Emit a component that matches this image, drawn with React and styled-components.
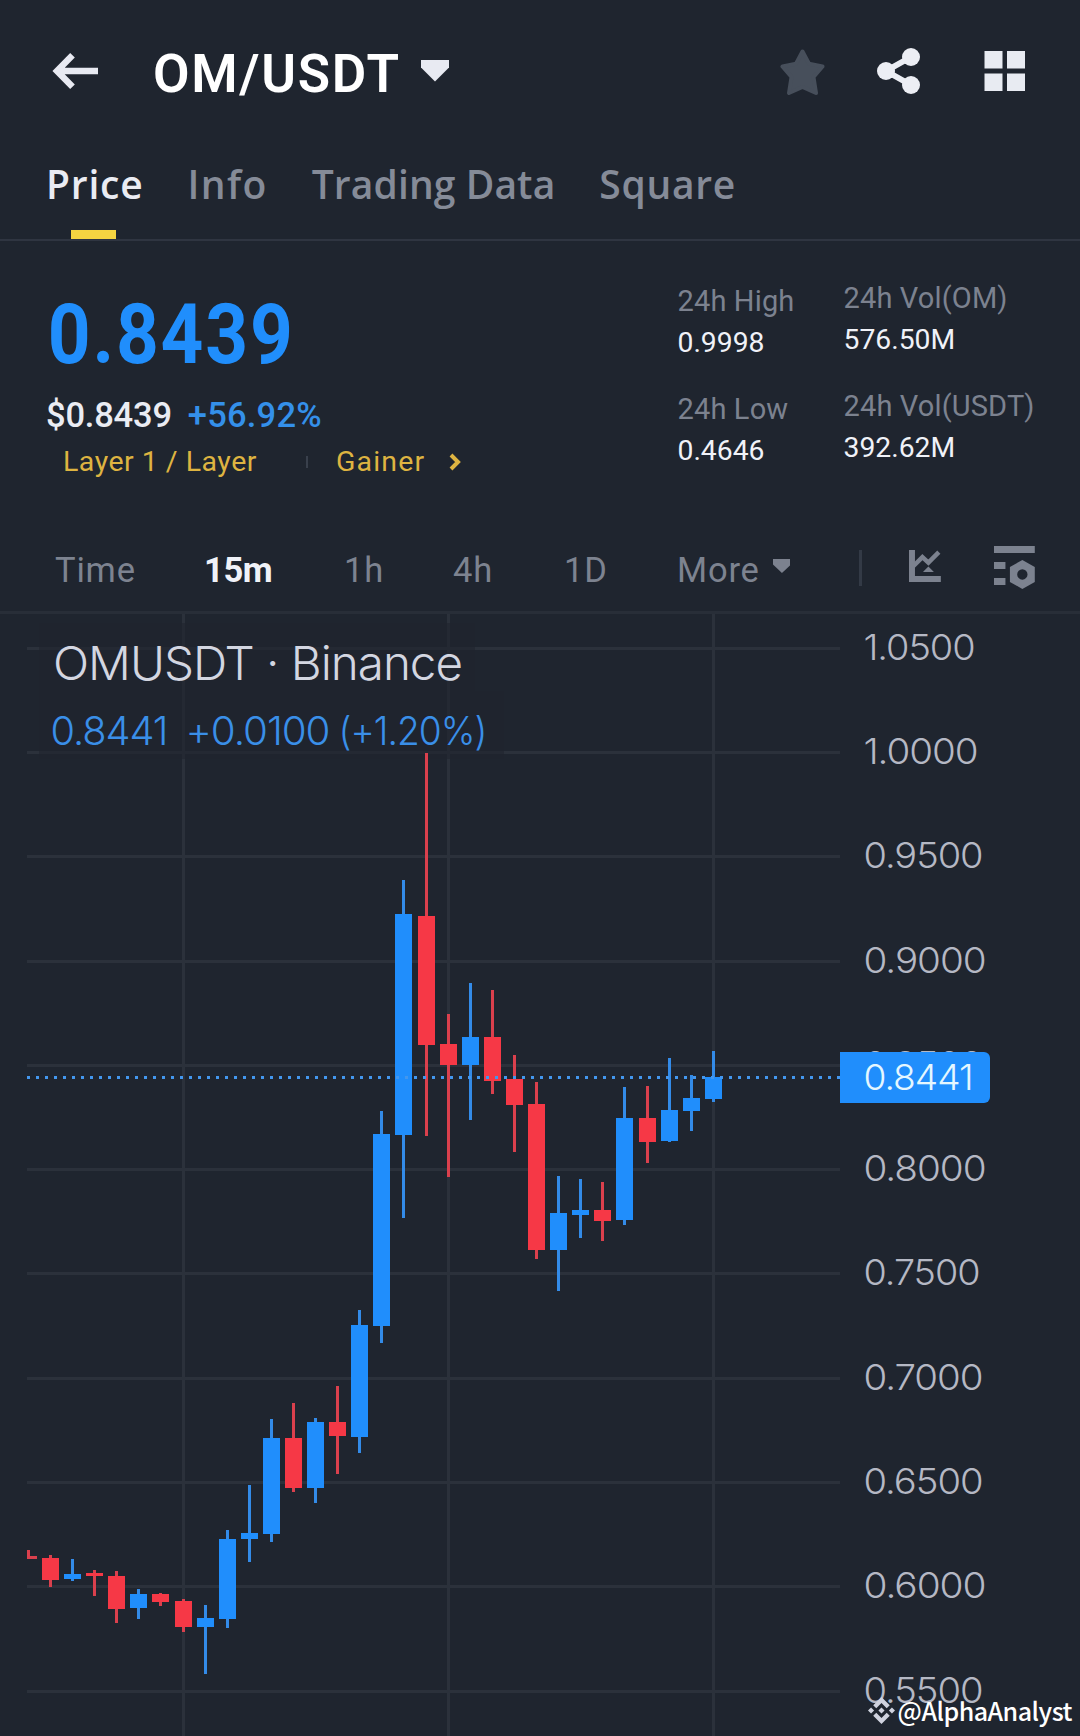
import React from "react";
import styled, { createGlobalStyle } from "styled-components";
import { SiBinance } from "react-icons/si";

const GlobalStyle = createGlobalStyle`
  * {
    box-sizing: border-box;
  }
  body {
    margin: 0;
    background-color: #1f252f;
  }
`;

const Screen = styled.div`
  position: relative;
  display: flex;
  flex-direction: column;
  width: 1080px;
  height: 1736px;
  overflow: hidden;
  background-color: #1f252f;
  color: #eaecf3;
  font-family: Roboto, "Liberation Sans", sans-serif;
`;

const Header = styled.header`
  display: flex;
  align-items: center;
  height: 142px;
  padding: 0 55px 0 52px;
`;

const Title = styled.h1`
  margin: 0 0 0 55px;
  padding-top: 6px;
  width: 268px;
  color: #fff;
  font-size: 53px;
  font-weight: 600;
  line-height: 60px;
  letter-spacing: 1.7px;
  white-space: nowrap;
`;

const HeaderActions = styled.div`
  display: flex;
  align-items: center;
  margin-left: auto;

  svg + svg {
    margin-left: 52px;
  }
  svg:last-child {
    margin-left: 64px;
  }
`;

const Tabs = styled.nav`
  display: flex;
  gap: 44px;
  height: 99px;
  padding: 17px 0 0 46px;
  border-bottom: 2px solid #2f3541;
`;

const Tab = styled.div`
  position: relative;
  color: ${({ $active }) => ($active ? "#eaecf3" : "#858b98")};
  font-family: "Open Sans", "Noto Sans", sans-serif;
  font-size: 39px;
  font-weight: 600;
  line-height: 50px;
  letter-spacing: ${({ $spacing }) => $spacing || 0}px;
  white-space: nowrap;

  &::after {
    content: "";
    display: ${({ $active }) => ($active ? "block" : "none")};
    position: absolute;
    bottom: 0;
    left: 25px;
    width: 45px;
    height: 9px;
    background-color: #f6d541;
  }
`;

const Summary = styled.section`
  display: flex;
  height: 287px;
`;

const PriceBlock = styled.div`
  width: 677.5px;
  padding: 52px 0 0 46px;
`;

const LastPrice = styled.div`
  padding-left: 2px;
  color: #208efc;
  font-size: 84px;
  font-weight: 700;
  line-height: 84px;
  letter-spacing: 2px;
  transform: scaleX(0.89);
  transform-origin: left;
`;

const ChangeRow = styled.div`
  display: flex;
  gap: 16px;
  margin-top: 17px;
  font-size: 34.5px;
  font-weight: 500;
  line-height: 42px;
  letter-spacing: -0.2px;
`;

const Change = styled.span`
  color: #3490ea;
  letter-spacing: 0.2px;
`;

const TagRow = styled.div`
  display: flex;
  align-items: center;
  margin-top: 8px;
  padding-left: 17px;
  color: #deb441;
  font-size: 28.5px;
  line-height: 36px;
`;

const TagDivider = styled.span`
  width: 2px;
  height: 12px;
  margin: 0 28px 0 49px;
  background-color: #39404c;
`;

const Tag = styled.span`
  letter-spacing: ${({ $spacing }) => $spacing}px;
`;

const TagArrow = styled.svg`
  margin-left: 24px;
`;

const StatColumn = styled.dl`
  width: 166px;
  margin: 0;
  padding-top: ${({ $top }) => $top}px;
  white-space: nowrap;
`;

const StatLabel = styled.dt`
  color: #7c828f;
  font-size: 29px;
  line-height: 36px;
  letter-spacing: 0.15px;
`;

const StatValue = styled.dd`
  margin: 6px 0 30px;
  color: #f0f2f8;
  font-size: 28.3px;
  line-height: 36px;
`;

const Intervals = styled.div`
  display: flex;
  align-items: center;
  height: 86px;
  padding-right: 45px;
  border-bottom: 3px solid #282e38;
`;

const Interval = styled.div`
  width: ${({ $width }) => $width}px;
  margin-left: ${({ $gap }) => $gap}px;
  color: ${({ $active }) => ($active ? "#f0f2f8" : "#7d8390")};
  font-size: 34.5px;
  font-weight: ${({ $active }) => ($active ? 700 : 400)};
  line-height: 40px;
  letter-spacing: ${({ $active }) => ($active ? -0.4 : 0.8)}px;
  white-space: nowrap;
`;

const IntervalDivider = styled.span`
  width: 3px;
  height: 36px;
  margin: 0 47px 4px 69px;
  background-color: #333a46;
`;

const IndicatorIcon = styled.svg`
  margin-left: 53px;
  margin-bottom: 4px;
`;

const Chart = styled.svg`
  display: block;
  font-family: Inter, "Liberation Sans", sans-serif;
  font-weight: 300;
  letter-spacing: -1px;
`;

const Watermark = styled.div`
  position: absolute;
  right: 8px;
  bottom: 8px;
  display: flex;
  align-items: center;
  gap: 3px;
  color: #fff;
  font-family: "Noto Sans CJK SC", "Noto Sans", sans-serif;
  font-size: 25px;
  font-weight: 500;
  line-height: 36px;

  svg {
    color: #d0d3df;
  }
  span {
    letter-spacing: -0.5px;
  }
`;

const UP = "#208efc";
const DOWN = "#f63846";
const UP_WICK = "#338be8";
const DOWN_WICK = "#da404d";
const GRID = "#2b313b";

// [center x, rising, high, low, body top, body bottom]
const candles = [
  [50.5, 0, 1555, 1587, 1558, 1580],
  [72.5, 1, 1559, 1581, 1574, 1579],
  [94.5, 0, 1570, 1596, 1573, 1576],
  [116.5, 0, 1571, 1623, 1576, 1609],
  [138.5, 1, 1589, 1619, 1594, 1608],
  [160.5, 0, 1593, 1606, 1594, 1602],
  [183.5, 0, 1599, 1632, 1601, 1627],
  [205.5, 1, 1605, 1674, 1618, 1627],
  [227.5, 1, 1530, 1628, 1539, 1619],
  [249.5, 1, 1485, 1562, 1533, 1539],
  [271.5, 1, 1419, 1542, 1438, 1534],
  [293.5, 0, 1403, 1492, 1438, 1488],
  [315.5, 1, 1418, 1503, 1422, 1488],
  [337.5, 0, 1386, 1474, 1422, 1436],
  [359.5, 1, 1310, 1453, 1325, 1437],
  [381.5, 1, 1111, 1343, 1134, 1326],
  [403.5, 1, 880, 1218, 914, 1135],
  [426.5, 0, 753, 1136, 916, 1045],
  [448.5, 0, 1014, 1177, 1044, 1065],
  [470.5, 1, 983, 1120, 1037, 1065],
  [492.5, 0, 990, 1094, 1037, 1081],
  [514.5, 0, 1055, 1152, 1079, 1105],
  [536.5, 0, 1082, 1259, 1104, 1250],
  [558.5, 1, 1176, 1291, 1213, 1250],
  [580.5, 1, 1179, 1238, 1210, 1215],
  [602.5, 0, 1182, 1241, 1210, 1221],
  [624.5, 1, 1087, 1225, 1118, 1220],
  [647.5, 0, 1086, 1163, 1118, 1142],
  [669.5, 1, 1058, 1142, 1110, 1141],
  [691.5, 1, 1075, 1131, 1098, 1111],
  [713.5, 1, 1051, 1102, 1077, 1099],
];

// [grid line y, label, label width]
const levels = [
  [648.5, "1.0500", 111],
  [752.5, "1.0000", 114],
  [856.5, "0.9500", 119],
  [961.5, "0.9000", 122],
  [1065.5, "0.8500", 119],
  [1169.5, "0.8000", 122],
  [1273.5, "0.7500", 116],
  [1378.5, "0.7000", 119],
  [1482.5, "0.6500", 119],
  [1586.5, "0.6000", 122],
  [1691.5, "0.5500", 119],
];

const columns = [183.5, 448.5, 713.5];

const Candle = ({ x, up, high, low, top, bottom }) => (
  <g>
    <rect
      x={x - 1.5}
      y={high}
      width="3"
      height={low - high}
      fill={up ? UP_WICK : DOWN_WICK}
    />
    <rect
      x={x - 8.5}
      y={top}
      width="17"
      height={bottom - top}
      fill={up ? UP : DOWN}
    />
  </g>
);

const Label = ({ width, children, ...rest }) => (
  <text textLength={width} lengthAdjust="spacingAndGlyphs" {...rest}>
    {children}
  </text>
);

const PriceChart = () => (
  <Chart width="1080" height="1122" viewBox="0 614 1080 1122">
    {levels.map(([y]) => (
      <rect key={y} x="27" y={y - 1.5} width="813" height="3" fill={GRID} />
    ))}
    {columns.map((x) => (
      <rect key={x} x={x - 1.5} y="614" width="3" height="1122" fill={GRID} />
    ))}

    {/* the oldest candle is cut off by the left edge of the pane */}
    <path d="M27 1550h3v6h7v3H27z" fill={DOWN_WICK} />
    {candles.map(([x, up, high, low, top, bottom]) => (
      <Candle key={x} {...{ x, up, high, low, top, bottom }} />
    ))}
    <line
      x1="27"
      x2="840"
      y1="1077.5"
      y2="1077.5"
      stroke="#4397ee"
      strokeWidth="3"
      strokeDasharray="3 6"
    />

    <rect x="39" y="623" width="436" height="68" fill="#1f252f" opacity="0.6" />
    <rect x="39" y="691" width="465" height="68" fill="#1f252f" opacity="0.6" />
    <rect x="425" y="753" width="3" height="8" fill={DOWN_WICK} />
    <Label x="53" y="680" fontSize="47" fill="#d3d6e1" width="409">
      OMUSDT · Binance
    </Label>
    <Label x="50.5" y="745" fontSize="39" fill="#3a8fe8" width="117">
      0.8441
    </Label>
    <Label x="185.5" y="745" fontSize="39" fill="#3a8fe8" width="144">
      +0.0100
    </Label>
    <Label x="338.5" y="745" fontSize="39" fill="#3a8fe8" width="148">
      (+1.20%)
    </Label>

    {levels.map(([y, label, width]) => (
      <Label
        key={label}
        x="863.5"
        y={y + 11}
        fontSize="36"
        fill="#b5b8c4"
        width={width}
      >
        {label}
      </Label>
    ))}
    <path d="M840 1052h144a6 6 0 0 1 6 6v39a6 6 0 0 1 -6 6H840z" fill={UP} />
    <Label x="863.5" y="1090" fontSize="36" fill="#e4f7ff" width="109">
      0.8441
    </Label>
  </Chart>
);

const App = () => {
  return (
    <>
      <GlobalStyle />
      <Screen>
        <Header>
          <svg width="46" height="38" viewBox="0 0 46 38" fill="none">
            <path
              d="M46 19H6M20.5 3.2L5 19l15.500 15.800"
              stroke="#e8eaf2"
              strokeWidth="6.500"
            />
          </svg>
          <Title>OM/USDT</Title>
          <svg width="28" height="22" viewBox="0 0 28 22">
            <path d="M0 0h28v7.500L14 21.500L0 7.500z" fill="#e8eaf2" />
          </svg>
          <HeaderActions>
            <svg width="45" height="47" viewBox="0 0 45 47">
              <path
                d="M22.500 3.500L29 15.800L42.500 18.500L33.500 29L36 45L22.500 39L9 45L11.500 29L2.500 18.500L16 15.800z"
                fill="#474f5b"
                stroke="#474f5b"
                strokeWidth="4"
                strokeLinejoin="round"
              />
            </svg>
            <svg width="43" height="46" viewBox="0 0 43 46" fill="#eceef4">
              <path
                d="M34 9L9 23l25 14"
                fill="none"
                stroke="#eceef4"
                strokeWidth="6"
              />
              <circle cx="34" cy="9" r="9" />
              <circle cx="9" cy="23" r="9" />
              <circle cx="34" cy="37" r="9" />
            </svg>
            <svg width="41" height="40" viewBox="0 0 41 40">
              <path
                d="M0.500 0h18v17.500h-18zM23 0h18v17.500H23zM0.500 22.500h18V40h-18zM23 22.500h18V40H23z"
                fill="#e8ebf2"
              />
            </svg>
          </HeaderActions>
        </Header>

        <Tabs>
          <Tab $active $spacing={0.8}>
            Price
          </Tab>
          <Tab $spacing={1.4}>Info</Tab>
          <Tab $spacing={0.1}>Trading Data</Tab>
          <Tab $spacing={0.7}>Square</Tab>
        </Tabs>

        <Summary>
          <PriceBlock>
            <LastPrice>0.8439</LastPrice>
            <ChangeRow>
              <span>$0.8439</span>
              <Change>+56.92%</Change>
            </ChangeRow>
            <TagRow>
              <Tag $spacing={0.5}>Layer 1 / Layer</Tag>
              <TagDivider />
              <Tag $spacing={1.2}>Gainer</Tag>
              <TagArrow width="12" height="18" viewBox="0 0 12 18" fill="none">
                <path d="M2 2l7 7l-7 7" stroke="#deb441" strokeWidth="4" />
              </TagArrow>
            </TagRow>
          </PriceBlock>
          <StatColumn $top={42}>
            <StatLabel>24h High</StatLabel>
            <StatValue>0.9998</StatValue>
            <StatLabel>24h Low</StatLabel>
            <StatValue>0.4646</StatValue>
          </StatColumn>
          <StatColumn $top={39}>
            <StatLabel>24h Vol(OM)</StatLabel>
            <StatValue>576.50M</StatValue>
            <StatLabel>24h Vol(USDT)</StatLabel>
            <StatValue>392.62M</StatValue>
          </StatColumn>
        </Summary>

        <Intervals>
          <Interval $gap={55} $width={80}>
            Time
          </Interval>
          <Interval $gap={69} $width={68} $active>
            15m
          </Interval>
          <Interval $gap={72} $width={40}>
            1h
          </Interval>
          <Interval $gap={69} $width={40}>
            4h
          </Interval>
          <Interval $gap={71} $width={42}>
            1D
          </Interval>
          <Interval $gap={71} $width={96}>
            More
          </Interval>
          <svg width="18" height="22" viewBox="0 0 18 22">
            <path d="M0 0h18v5.500L9 14L0 5.500z" fill="#7c828f" />
          </svg>
          <IntervalDivider />
          <svg width="32" height="40" viewBox="0 0 32 40">
            <path d="M0 0h6v26h26v6H0z" fill="#7c828f" />
            <path
              d="M4 16.500L13.500 7L19.500 12.500L30 2"
              fill="none"
              stroke="#7c828f"
              strokeWidth="4.500"
            />
            <path d="M19.500 16.500L25 22H14z" fill="#7c828f" />
          </svg>
          <IndicatorIcon width="41" height="43" viewBox="0 0 41 43">
            <path d="M0 0h41v7H0zM0 16h11.500v7H0zM0 32h11.500v7H0z" fill="#7c828f" />
            <path
              d="M28.500 14L41 21V36L28.500 43L16 36V21zM28.500 23.300a5.200 5.200 0 1 0 0 10.400a5.200 5.200 0 1 0 0 -10.400z"
              fill="#7c828f"
              fillRule="evenodd"
            />
          </IndicatorIcon>
        </Intervals>

        <PriceChart />

        <Watermark>
          <SiBinance size={27} />
          <span>@AlphaAnalyst</span>
        </Watermark>
      </Screen>
    </>
  );
};

export default App;
